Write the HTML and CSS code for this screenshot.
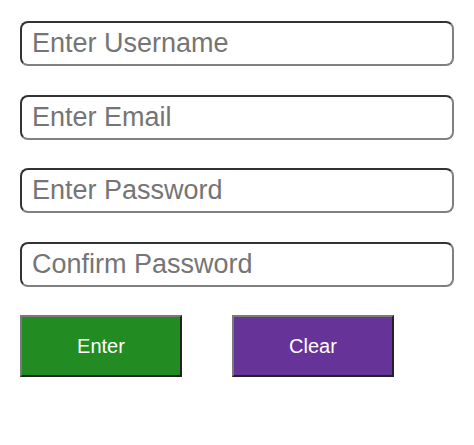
FILE: index.html
```html
<!DOCTYPE html>
<html>
<head>
<meta charset="utf-8">
<link rel="stylesheet" href="styles.css">
</head>
<body>
<form class="form">
  <input class="field" type="text" placeholder="Enter Username">
  <input class="field" type="email" placeholder="Enter Email">
  <input class="field" type="password" placeholder="Enter Password">
  <input class="field" type="password" placeholder="Confirm Password">
  <div class="actions">
    <button class="btn btn-enter" type="button">Enter</button>
    <button class="btn btn-clear" type="reset">Clear</button>
  </div>
</form>
</body>
</html>
```
FILE: styles.css
```css
html, body {
  margin: 0;
  background: #ffffff;
}
body {
  padding: 21px 20px;
  font-family: "Liberation Sans", Arial, sans-serif;
}
.form {
  display: flex;
  flex-direction: column;
  gap: 28.5px;
  width: 434px;
}
.field {
  box-sizing: border-box;
  width: 434px;
  height: 45px;
  margin: 0;
  padding: 0 10px;
  border: 2px solid;
  border-color: #333333 #808080 #808080 #333333;
  border-radius: 8px;
  font-family: "Liberation Sans", Arial, sans-serif;
  font-size: 27px;
  color: #222;
  background: #fff;
  outline: none;
}
.field::placeholder {
  color: #757575;
}
.actions {
  display: flex;
  gap: 50px;
}
.btn {
  box-sizing: border-box;
  width: 162px;
  height: 62px;
  margin: 0;
  padding: 0;
  border: 2px solid;
  border-color: #7a7a7a #222222 #222222 #7a7a7a;
  font-family: "Liberation Sans", Arial, sans-serif;
  font-size: 20px;
  color: #ffffff;
  cursor: pointer;
}
.btn-enter {
  background: #228b22;
}
.btn-clear {
  background: #663399;
}
```
